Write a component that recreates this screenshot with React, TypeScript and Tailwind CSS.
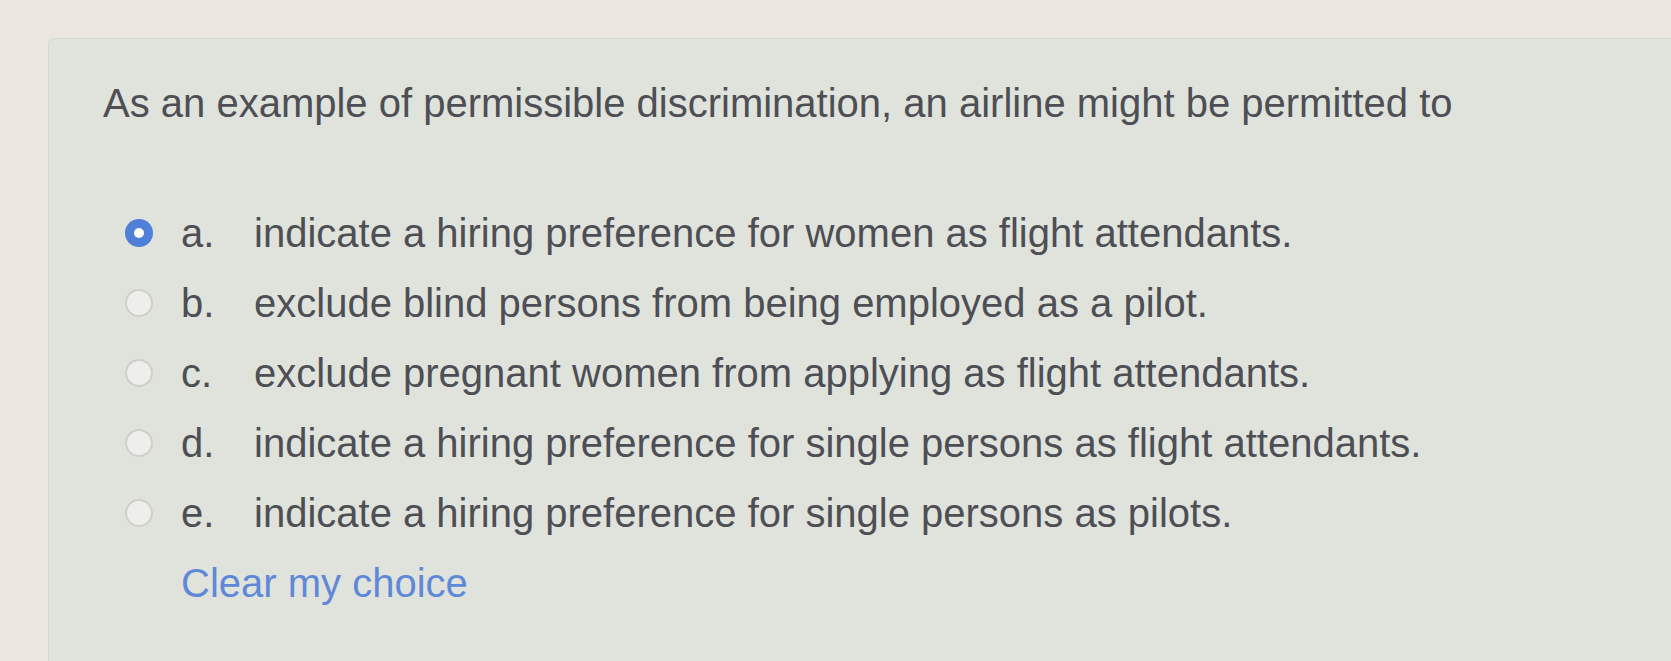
const options = [
  { key: "a", text: "indicate a hiring preference for women as flight attendants." },
  { key: "b", text: "exclude blind persons from being employed as a pilot." },
  { key: "c", text: "exclude pregnant women from applying as flight attendants." },
  { key: "d", text: "indicate a hiring preference for single persons as flight attendants." },
  { key: "e", text: "indicate a hiring preference for single persons as pilots." },
];

export default function App() {
  const selected = "a";

  return (
    <div className="h-[661px] w-[1671px] overflow-hidden bg-[#ebe6df] pl-[48px] pt-[38px] font-['Liberation_Sans',Arial,sans-serif]">
      <div className="h-full rounded-tl-md border-l border-t border-[#d3d8d1] bg-[#dfe3dc] pl-[54px] pt-[41px]">
        <p className="text-[40px] leading-[46px] text-[#4e4e55]">
          As an example of permissible discrimination, an airline might be permitted to
        </p>

        <div className="mt-[72px] flex flex-col">
          {options.map((o) => (
            <label key={o.key} className="flex h-[70px] cursor-pointer items-center">
              {o.key === selected ? (
                <span className="ml-[22px] flex h-[28px] w-[28px] items-center justify-center rounded-full bg-[#4f7fd8]">
                  <span className="h-[10px] w-[10px] rounded-full bg-white" />
                </span>
              ) : (
                <span className="ml-[22px] h-[28px] w-[28px] rounded-full border-2 border-[#cfd0cb] bg-[#eeeeea]" />
              )}
              <span className="ml-[28px] w-[73px] text-[40px] leading-[46px] text-[#4e4e55]">{o.key}.</span>
              <span className="text-[40px] leading-[46px] text-[#4e4e55]">{o.text}</span>
            </label>
          ))}
        </div>

        <a href="#" className="ml-[78px] mt-[12px] block w-fit text-[40px] leading-[46px] text-[#5f89d8]">
          Clear my choice
        </a>
      </div>
    </div>
  );
}
